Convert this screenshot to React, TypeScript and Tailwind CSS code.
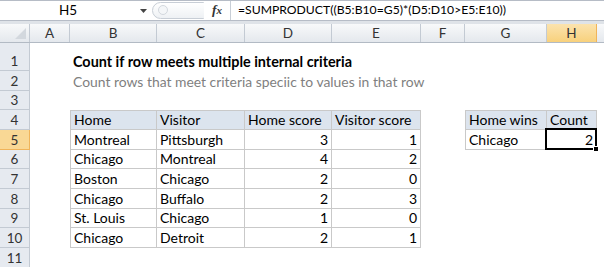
import clsx from "clsx";

const cols = [
  { key: "A", w: 40 },
  { key: "B", w: 87 },
  { key: "C", w: 88 },
  { key: "D", w: 87 },
  { key: "E", w: 89 },
  { key: "F", w: 44 },
  { key: "G", w: 82 },
  { key: "H", w: 50 },
  { key: "", w: 60 },
];

const rowHeights = [28, 20, 19, 20, 20, 19, 20, 20, 19, 20, 20];

const games = [
  ["Montreal", "Pittsburgh", "3", "1"],
  ["Chicago", "Montreal", "4", "2"],
  ["Boston", "Chicago", "2", "0"],
  ["Chicago", "Buffalo", "2", "3"],
  ["St. Louis", "Chicago", "1", "0"],
  ["Chicago", "Detroit", "2", "1"],
];

type Cell = { text: string; right?: boolean; head?: boolean; table?: boolean };

const cells: Record<string, Cell> = {
  B4: { text: "Home", head: true, table: true },
  C4: { text: "Visitor", head: true, table: true },
  D4: { text: "Home score", head: true, table: true },
  E4: { text: "Visitor score", head: true, table: true },
  G4: { text: "Home wins", head: true, table: true },
  H4: { text: "Count", head: true, table: true },
  G5: { text: "Chicago", table: true },
  H5: { text: "2", right: true, table: true },
};

games.forEach((g, i) => {
  const r = i + 5;
  cells["B" + r] = { text: g[0], table: true };
  cells["C" + r] = { text: g[1], table: true };
  cells["D" + r] = { text: g[2], right: true, table: true };
  cells["E" + r] = { text: g[3], right: true, table: true };
});

const font = { fontFamily: "Lato, 'Open Sans', sans-serif" };

const SheetCell = ({ col, row }: { col: string; row: number }) => {
  const id = col + row;
  const cell = cells[id];
  const w = cols.find((c) => c.key === col)!.w;
  const firstCol = col === "B" || col === "G";
  const firstRow = row === 4;

  if (row === 1 && col === "B") {
    return (
      <div className="relative h-full shrink-0" style={{ width: w }}>
        <span className="absolute bottom-0 left-[3px] whitespace-nowrap text-[14.4px] leading-[18px] font-bold text-black">
          Count if row meets multiple internal criteria
        </span>
      </div>
    );
  }
  if (row === 2 && col === "B") {
    return (
      <div className="relative h-full shrink-0" style={{ width: w }}>
        <span className="absolute bottom-0 left-[3px] whitespace-nowrap text-[13.9px] leading-[18px] text-[#7f7f7f]">
          Count rows that meet criteria speciic to values in that row
        </span>
      </div>
    );
  }

  return (
    <div
      className={clsx(
        "relative flex h-full shrink-0 items-end text-[14px] text-black",
        cell?.table && "border-b border-r border-[#c9c9c9]",
        cell?.table && firstCol && "border-l",
        cell?.table && firstRow && "border-t",
        cell?.head && "bg-[#dce4ee]",
        cell?.right ? "justify-end pr-[3px]" : "pl-[3px]",
      )}
      style={{ width: w }}
    >
      {cell && <span className="whitespace-nowrap leading-[18px]">{cell.text}</span>}
      {id === "H5" && (
        <div className="absolute -left-[2px] -top-[2px] h-[calc(100%+3px)] w-[calc(100%+3px)] border-2 border-black">
          <div className="absolute -bottom-[4px] -right-[4px] h-[6px] w-[6px] border border-white bg-black" />
        </div>
      )}
    </div>
  );
};

const FormulaBar = () => (
  <div className="flex h-[21px] border-y border-[#b6bcc6] bg-white text-[13.5px] text-black">
    <div className="relative flex w-[150px] shrink-0 items-center">
      <span className="w-[136px] text-center">H5</span>
      <svg className="absolute left-[140px] top-[8px]" width="7" height="4" viewBox="0 0 7 4">
        <path d="M0 0h7L3.5 4z" fill="#444" />
      </svg>
    </div>
    <div className="flex w-[54px] shrink-0 items-center overflow-hidden">
      <div className="relative ml-[2px] h-[17px] w-[60px] shrink-0 rounded-full border border-[#c8ced6] bg-gradient-to-b from-white to-[#eef1f4]">
        <div className="absolute left-[5px] top-[2px] h-[10px] w-[10px] rounded-full border border-[#d3d8de] bg-[#f4f6f8]" />
      </div>
    </div>
    <div className="flex w-[26px] shrink-0 items-center justify-center">
      <span className="font-bold italic text-[#333]" style={{ fontFamily: "'Liberation Serif', serif" }}>
        f<span className="text-[11px]">x</span>
      </span>
    </div>
    <div className="flex flex-1 items-center border-l border-[#c8ced6] pl-[7px] text-[12.2px]">
      =SUMPRODUCT((B5:B10=G5)*(D5:D10&gt;E5:E10))
    </div>
  </div>
);

export default function App() {
  return (
    <div className="h-[267px] w-[604px] overflow-hidden bg-white" style={font}>
      <FormulaBar />
      <div className="h-[3px] bg-[#dfe3e8]" />
      <div className="flex h-[19px] border-b border-[#b2bac4]">
        <div className="relative w-[30px] shrink-0 border-r border-[#c3cad3] bg-gradient-to-b from-[#f8f9fa] to-[#e4e8ed]">
          <svg className="absolute bottom-[3px] right-[3px]" width="11" height="11" viewBox="0 0 11 11">
            <path d="M11 0V11H0z" fill="#d3d8de" />
          </svg>
        </div>
        {cols.map((c) => (
          <div
            key={c.key + c.w}
            className={clsx(
              "flex shrink-0 items-center justify-center border-r text-[13.5px] text-[#333]",
              c.key === "H"
                ? "border-[#f0b45a] bg-gradient-to-b from-[#fbe3ae] to-[#f8d17c]"
                : "border-[#c3cad3] bg-gradient-to-b from-[#f8f9fa] to-[#e4e8ed]",
            )}
            style={{ width: c.w }}
          >
            {c.key}
          </div>
        ))}
      </div>
      {rowHeights.map((h, i) => {
        const row = i + 1;
        return (
          <div key={row} className="flex" style={{ height: h }}>
            <div
              className={clsx(
                "flex w-[30px] shrink-0 items-end justify-center border-b border-r text-[13.5px] leading-[18px] text-[#333]",
                row === 5
                  ? "border-[#f0b45a] bg-[#f9d895]"
                  : "border-[#c3cad3] bg-[#e6eaf0]",
              )}
            >
              {row}
            </div>
            {cols.map((c) => (
              <SheetCell key={c.key + c.w} col={c.key} row={row} />
            ))}
          </div>
        );
      })}
    </div>
  );
}
